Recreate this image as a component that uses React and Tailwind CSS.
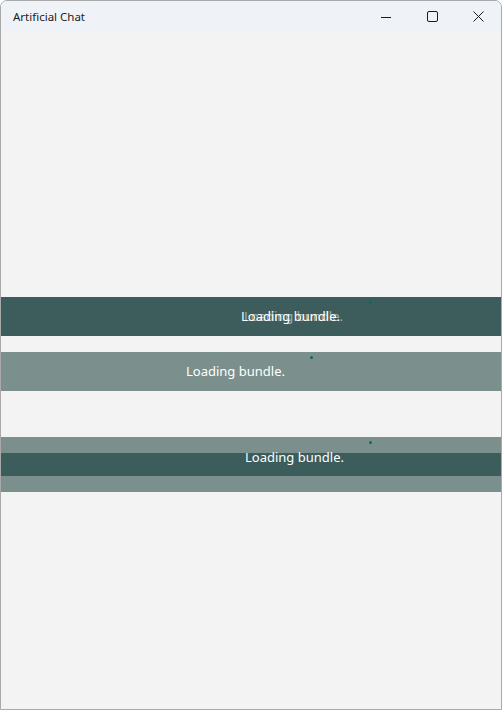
import React from "react";

const font = { fontFamily: '"Noto Sans", "Open Sans", sans-serif' };

const Dot = ({ className = "" }) => (
  <span className={`absolute w-[3px] h-[3px] rounded-full bg-[#0b6b6b] ${className}`} />
);

const Label = ({ className = "" }) => (
  <span className={`absolute text-[13px] leading-[18px] text-white whitespace-nowrap ${className}`}>
    Loading bundle.
  </span>
);

export default function App() {
  return (
    <div
      className="w-[502px] h-[710px] flex flex-col bg-[#f3f3f3] border border-[#a9a9a9] rounded-t-[7px] overflow-hidden"
      style={font}
    >
      {/* title bar */}
      <div className="h-[31px] shrink-0 flex items-center bg-[#eff3f7] text-[#1b1b1b]">
        <span className="pl-[12px] text-[11.5px] flex-1">Artificial Chat</span>
        <div className="flex items-center h-full">
          <button className="w-[46px] h-full flex items-center justify-center">
            <svg width="10" height="10" viewBox="0 0 10 10">
              <path d="M0 5.5h10" stroke="#1b1b1b" strokeWidth="1" />
            </svg>
          </button>
          <button className="w-[46px] h-full flex items-center justify-center">
            <svg width="11" height="11" viewBox="0 0 11 11">
              <rect x="0.5" y="0.5" width="10" height="10" rx="1.5" fill="none" stroke="#1b1b1b" strokeWidth="1" />
            </svg>
          </button>
          <button className="w-[46px] h-full flex items-center justify-center">
            <svg width="11" height="11" viewBox="0 0 11 11">
              <path d="M0.5 0.5l10 10M10.5 0.5l-10 10" stroke="#1b1b1b" strokeWidth="1" />
            </svg>
          </button>
        </div>
      </div>

      {/* content */}
      <div className="flex-1 flex flex-col pt-[265px]">
        <div className="relative h-[39px] bg-[#3d5c5c]">
          <Label className="left-[243px] top-[10px] text-[#aab8b8] opacity-50" />
          <Label className="left-[240px] top-[10px]" />
          <Dot className="left-[368px] top-[4px]" />
        </div>

        <div className="relative h-[39px] mt-[16px] bg-[#7b8f8c]">
          <Label className="left-[185px] top-[10px]" />
          <Dot className="left-[309px] top-[4px]" />
        </div>

        <div className="relative h-[55px] mt-[46px] bg-[#7b8f8c] flex flex-col pt-[16px]">
          <div className="h-[23px] bg-[#3d5c5c]" />
          <Label className="left-[244px] top-[11px]" />
          <Dot className="left-[368px] top-[4px]" />
        </div>
      </div>
    </div>
  );
}
